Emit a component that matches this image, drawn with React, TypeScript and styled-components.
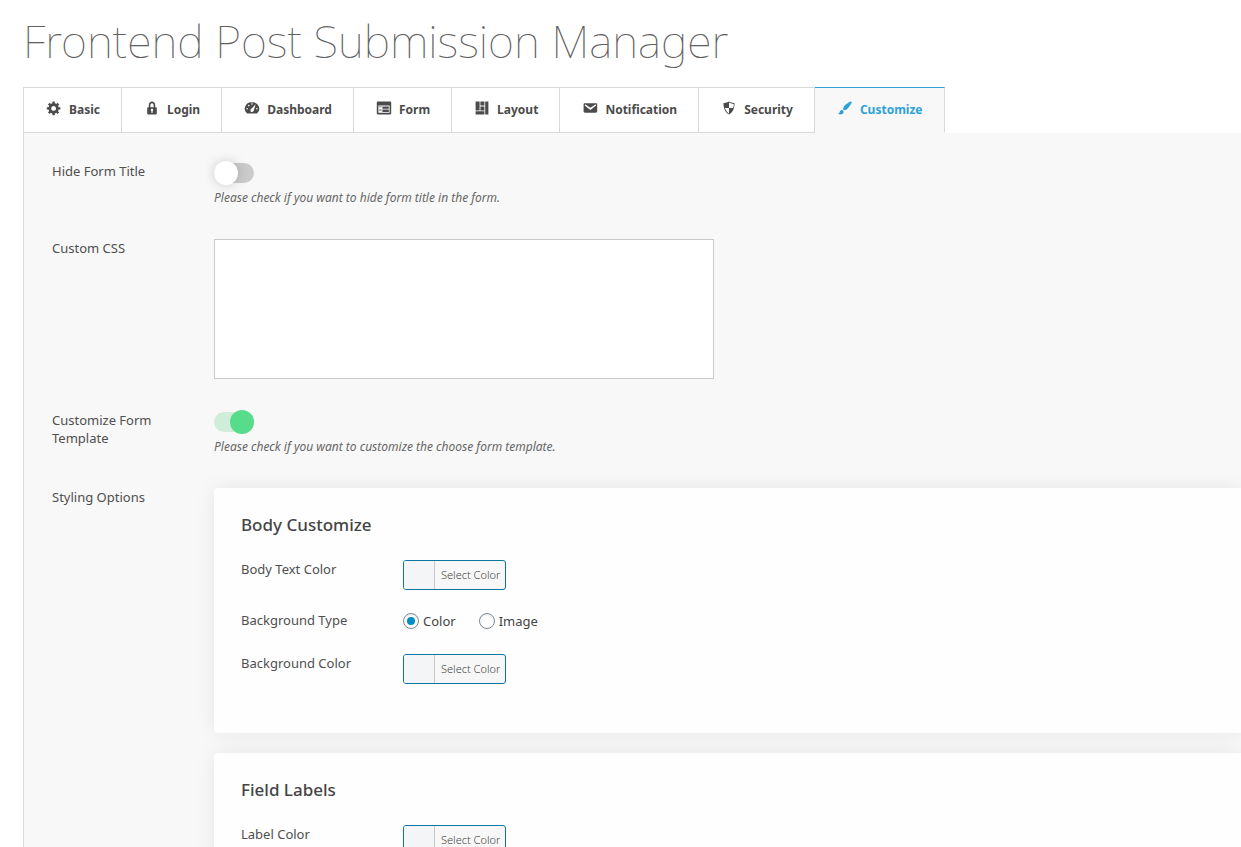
import React, { useState } from "react";
import styled, { createGlobalStyle } from "styled-components";

const GlobalStyle = createGlobalStyle`
  *, *::before, *::after { box-sizing: border-box; }
  body {
    margin: 0;
    background: #fff;
    color: #444;
    font: 400 13px/18px "Noto Sans", "Open Sans", sans-serif;
  }
`;

const Page = styled.main`
  padding: 14px 0 0 23px;
  overflow-x: hidden;
`;

const Title = styled.h1`
  margin: 0 0 19px;
  color: #606060;
  font-size: 45px;
  font-weight: 100;
  line-height: 54px;
  white-space: nowrap;
`;

const TabList = styled.nav`
  display: flex;
  border-left: 1px solid #d9d9d9;
`;

const Tab = styled.button<{ $active: boolean }>`
  display: flex;
  align-items: center;
  gap: 7px;
  height: 46px;
  padding: 0 21px 0 22px;
  border: solid ${(p) => (p.$active ? "#f8f8f8" : "#d9d9d9")};
  border-width: 1px 1px 1px 0;
  border-top-color: ${(p) => (p.$active ? "#2ea2d8" : "#d9d9d9")};
  border-right-color: #d9d9d9;
  background: ${(p) => (p.$active ? "#f8f8f8" : "#fff")};
  color: ${(p) => (p.$active ? "#2ea2d8" : "#4b4b4b")};
  font: inherit;
  font-size: 12px;
  font-weight: 700;
  cursor: pointer;
`;

const Icon = styled.svg`
  width: 16px;
  height: 16px;
  margin-bottom: 4px;
  fill: currentColor;
`;

const Panel = styled.section`
  display: flex;
  flex-direction: column;
  gap: 32px;
  padding: 29px 0 32px 28px;
  border-left: 1px solid #d9d9d9;
  background: #f8f8f8;
`;

const Row = styled.div`
  display: grid;
  grid-template-columns: 130px minmax(0, 1fr);
  column-gap: 32px;
  align-items: start;
`;

const RowLabel = styled.label`
  color: #4f4f4f;
`;

const Switch = styled.input`
  appearance: none;
  position: relative;
  display: block;
  width: 40px;
  height: 20px;
  margin: 1px 0 6px;
  border-radius: 10px;
  background: #cbcbcb;
  cursor: pointer;

  &::before {
    content: "";
    position: absolute;
    top: -2px;
    left: 0;
    width: 24px;
    height: 24px;
    border-radius: 50%;
    background: #fff;
    box-shadow: 0 0 12px rgba(0, 0, 0, 0.18);
  }
  &:checked { background: #d0eddb; }
  &:checked::before {
    left: 16px;
    background: #56dc8a;
    box-shadow: none;
  }
`;

const Description = styled.p`
  margin: 0;
  color: #666;
  font-size: 12px;
  font-style: italic;
`;

const CssBox = styled.textarea`
  display: block;
  width: 100%;
  max-width: 500px;
  height: 140px;
  padding: 8px;
  border: 1px solid #c9c9c9;
  background: #fff;
  font: 13px/18px "Liberation Mono", monospace;
  resize: none;
`;

const Cards = styled.div`
  display: flex;
  flex-direction: column;
  gap: 20px;
`;

const Card = styled.section`
  display: flex;
  flex-direction: column;
  gap: 21px;
  padding: 25px 27px 49px;
  border-radius: 4px 0 0 4px;
  background: #fefefe;
  box-shadow: 0 0 20px rgba(0, 0, 0, 0.08);
`;

const CardTitle = styled.h2`
  margin: 0 0 2px;
  color: #444;
  font-size: 17px;
  font-weight: 500;
  line-height: 24px;
`;

const ColorButton = styled.button`
  display: flex;
  height: 30px;
  padding: 0;
  border: 1px solid #0a75a2;
  border-radius: 3px;
  background: #f7f7f7;
  color: #444;
  font: inherit;
  font-size: 11px;
  font-weight: 300;
  line-height: 28px;
  cursor: pointer;
`;

const Swatch = styled.span`
  width: 30px;
  height: 28px;
  border-radius: 2px 0 0 2px;
  background: #f3f5f6;
`;

const ColorText = styled.span`
  padding: 0 5px 0 6px;
  border-left: 1px solid #c6c8ca;
`;

const Radios = styled.div`
  display: flex;
  gap: 23px;
  padding-bottom: 2px;
`;

const RadioLabel = styled.label`
  display: flex;
  align-items: center;
  gap: 4px;
  height: 20px;
`;

const Radio = styled.input`
  appearance: none;
  display: grid;
  place-content: center;
  width: 16px;
  height: 16px;
  margin: 0;
  border: 1px solid #7e8993;
  border-radius: 50%;
  background: #fff;
  box-shadow: inset 0 1px 2px rgba(0, 0, 0, 0.1);

  &:checked::before {
    content: "";
    width: 8px;
    height: 8px;
    border-radius: 50%;
    background: #008ec2;
  }
`;

const tabs = [
  { name: "Basic", path: "M18 12h-2.18c-.17.7-.44 1.35-.81 1.93l1.54 1.54-2.1 2.1-1.54-1.54c-.58.36-1.23.63-1.91.79V19H8v-2.18c-.68-.16-1.33-.43-1.91-.79l-1.54 1.54-2.12-2.12 1.54-1.54c-.36-.58-.63-1.23-.79-1.91H1V9.03h2.17c.16-.7.44-1.35.8-1.94L2.43 5.55l2.1-2.1 1.54 1.54c.58-.37 1.24-.64 1.93-.81V2h3v2.18c.68.16 1.33.43 1.91.79l1.54-1.54 2.12 2.12-1.54 1.54c.36.59.64 1.24.8 1.94H18V12zm-8.5 1.5c1.66 0 3-1.34 3-3s-1.34-3-3-3-3 1.34-3 3 1.34 3 3 3z" },
  { name: "Login", path: "M14 9h1c.55 0 1 .45 1 1v7c0 .55-.45 1-1 1H5c-.55 0-1-.45-1-1v-7c0-.55.45-1 1-1h1V6c0-2.21 1.79-4 4-4s4 1.79 4 4v3zm-2 0V6c0-1.1-.9-2-2-2s-2 .9-2 2v3h4zm-1 7l-.36-2.15c.51-.24.86-.75.86-1.35 0-.83-.67-1.5-1.5-1.5s-1.5.67-1.5 1.5c0 .6.35 1.11.86 1.35L9 16h2z" },
  { name: "Dashboard", path: "M3.76 17h12.48A7.998 7.998 0 0 0 10 3a7.998 7.998 0 0 0-6.24 14zM10 4c.55 0 1 .45 1 1s-.45 1-1 1-1-.45-1-1 .45-1 1-1zM6 6c.55 0 1 .45 1 1s-.45 1-1 1-1-.45-1-1 .45-1 1-1zm8.6-.6l-2.2 7.2c-.1 1.2-.9 2.4-2.4 2.4-1.1 0-2-.9-2-2 0-.7.3-1.3.9-1.7zM4 10c.55 0 1 .45 1 1s-.45 1-1 1-1-.45-1-1 .45-1 1-1zm12 0c.55 0 1 .45 1 1s-.45 1-1 1-1-.45-1-1 .45-1 1-1z" },
  { name: "Form", path: "M2 2h16c.55 0 1 .45 1 1v14c0 .55-.45 1-1 1H2c-.55 0-1-.45-1-1V3c0-.55.45-1 1-1zm15 14V7H3v9h14zM4 8v1h3V8H4zm4 0v3h8V8H8zm-4 4v1h3v-1H4zm4 0v3h8v-3H8z" },
  { name: "Layout", path: "M2 2h5v11H2V2zm6 0h5v5H8V2zm6 0h4v16h-4V2zM8 8h5v5H8V8zm-6 6h11v4H2v-4z" },
  { name: "Notification", path: "M3.87 4h13.25C18.37 4 19 4.59 19 5.79v8.42c0 1.19-.63 1.79-1.88 1.79H3.87c-1.25 0-1.88-.6-1.88-1.79V5.79c0-1.2.63-1.79 1.88-1.79zm6.62 8.6l6.74-5.53c.24-.2.43-.66.13-1.07-.29-.41-.82-.42-1.17-.17l-5.7 3.86L4.8 5.83c-.35-.25-.88-.24-1.17.17-.3.41-.11.87.13 1.07z" },
  { name: "Security", path: "M10 2s3 2 7 2c0 11-7 14-7 14S3 15 3 4c4 0 7-2 7-2zm0 8h5s1-1 1-5c0 0-5-1-6-2v7H5c1 4 5 7 5 7v-7z" },
  { name: "Customize", path: "M18.33 3.57s.27-.8-.31-1.36c-.53-.52-1.22-.24-1.22-.24-.61.3-5.76 3.47-7.67 5.57-.86.96-2.06 3.79-1.09 4.82.92.98 3.96-.17 4.79-1 2.06-2.06 5.21-7.17 5.5-7.79zM1.4 17.65c2.37-1.56 1.46-3.41 3.23-4.64.93-.65 2.22-.62 3.08.29.63.67.8 2.57-.16 3.46-1.57 1.45-4 1.55-6.15.89z" },
];

function ColorRow({ id, label }: { id: string; label: string }) {
  return (
    <Row>
      <RowLabel htmlFor={id}>{label}</RowLabel>
      <div>
        <ColorButton id={id} type="button">
          <Swatch />
          <ColorText>Select Color</ColorText>
        </ColorButton>
      </div>
    </Row>
  );
}

export default function App() {
  const [active, setActive] = useState("Customize");
  return (
    <Page>
      <GlobalStyle />
      <Title>Frontend Post Submission Manager</Title>
      <TabList>
        {tabs.map((t) => (
          <Tab key={t.name} type="button" $active={t.name === active} onClick={() => setActive(t.name)}>
            <Icon viewBox="0 0 20 20" aria-hidden="true">
              <path fillRule="evenodd" d={t.path} />
            </Icon>
            {t.name}
          </Tab>
        ))}
      </TabList>
      <Panel>
        <Row>
          <RowLabel htmlFor="hide-title">Hide Form Title</RowLabel>
          <div>
            <Switch id="hide-title" type="checkbox" />
            <Description>Please check if you want to hide form title in the form.</Description>
          </div>
        </Row>
        <Row>
          <RowLabel htmlFor="custom-css">Custom CSS</RowLabel>
          <CssBox id="custom-css" />
        </Row>
        <Row>
          <RowLabel htmlFor="customize-template">Customize Form Template</RowLabel>
          <div>
            <Switch id="customize-template" type="checkbox" defaultChecked />
            <Description>Please check if you want to customize the choose form template.</Description>
          </div>
        </Row>
        <Row>
          <RowLabel as="span">Styling Options</RowLabel>
          <Cards>
            <Card>
              <CardTitle>Body Customize</CardTitle>
              <ColorRow id="body-text-color" label="Body Text Color" />
              <Row>
                <RowLabel as="span" id="bg-type">Background Type</RowLabel>
                <Radios role="radiogroup" aria-labelledby="bg-type">
                  <RadioLabel>
                    <Radio type="radio" name="bg-type" defaultChecked />
                    Color
                  </RadioLabel>
                  <RadioLabel>
                    <Radio type="radio" name="bg-type" />
                    Image
                  </RadioLabel>
                </Radios>
              </Row>
              <ColorRow id="bg-color" label="Background Color" />
            </Card>
            <Card>
              <CardTitle>Field Labels</CardTitle>
              <ColorRow id="label-color" label="Label Color" />
            </Card>
          </Cards>
        </Row>
      </Panel>
    </Page>
  );
}
